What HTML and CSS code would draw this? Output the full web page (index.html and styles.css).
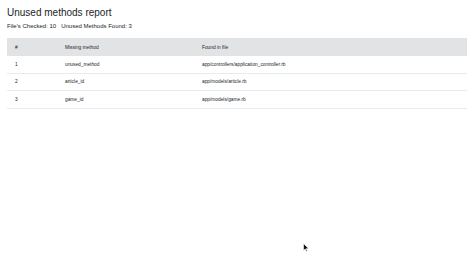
FILE: index.html
```html
<!DOCTYPE html>
<html lang="en">

<head>
    <meta charset="UTF-8">
    <meta name="viewport" content="width=device-width, initial-scale=1.0">
    <title>Unused methods report</title>
    <link rel="stylesheet" href="styles.css">
</head>

<body>
    <div class="report">
        <h1>Unused methods report</h1>
        <p class="summary">File's Checked: 10 &nbsp; Unused Methods Found: 3</p>

        <table class="results">
            <thead>
                <tr>
                    <th class="col-num">#</th>
                    <th class="col-method">Missing method</th>
                    <th>Found in file</th>
                </tr>
            </thead>
            <tbody>
                <tr>
                    <td>1</td>
                    <td>unused_method</td>
                    <td>app/controllers/application_controller.rb</td>
                </tr>
                <tr>
                    <td>2</td>
                    <td>article_id</td>
                    <td>app/models/article.rb</td>
                </tr>
                <tr>
                    <td>3</td>
                    <td>game_id</td>
                    <td>app/models/game.rb</td>
                </tr>
            </tbody>
        </table>
    </div>

    <svg class="cursor" width="6" height="9" viewBox="0 0 6 9">
        <path d="M0.5 0.5 L0.5 7.5 L2.2 6 L3.4 8.5 L4.3 8.1 L3.2 5.7 L5.5 5.6 Z" fill="#111" stroke="#fff" stroke-width="0.6"/>
    </svg>
</body>

</html>
```

FILE: styles.css
```css
/* General */
body {
    font-family: 'Liberation Sans', Arial, sans-serif;
    background-color: #ffffff;
    color: #212529;
    margin: 0;
}

.report {
    padding: 7px 7px 0 7px;
}

h1 {
    font-size: 10px;
    font-weight: 400;
    margin: 0 0 3px 0;
    line-height: 12px;
}

.summary {
    font-size: 6px;
    margin: 0 0 8px 0;
    line-height: 8px;
}

/* Table */
.results {
    width: 100%;
    border-collapse: collapse;
    font-size: 4.8px;
}

.results th {
    background-color: #e2e3e5;
    font-weight: 400;
    text-align: left;
    height: 18px;
    padding: 0 8px;
}

.results td {
    height: 16.5px;
    padding: 0 8px;
    border-bottom: 1px solid #e9ecef;
}

.col-num {
    width: 34px;
}

.col-method {
    width: 121px;
}

.cursor {
    position: absolute;
    left: 303px;
    top: 243px;
}
```
